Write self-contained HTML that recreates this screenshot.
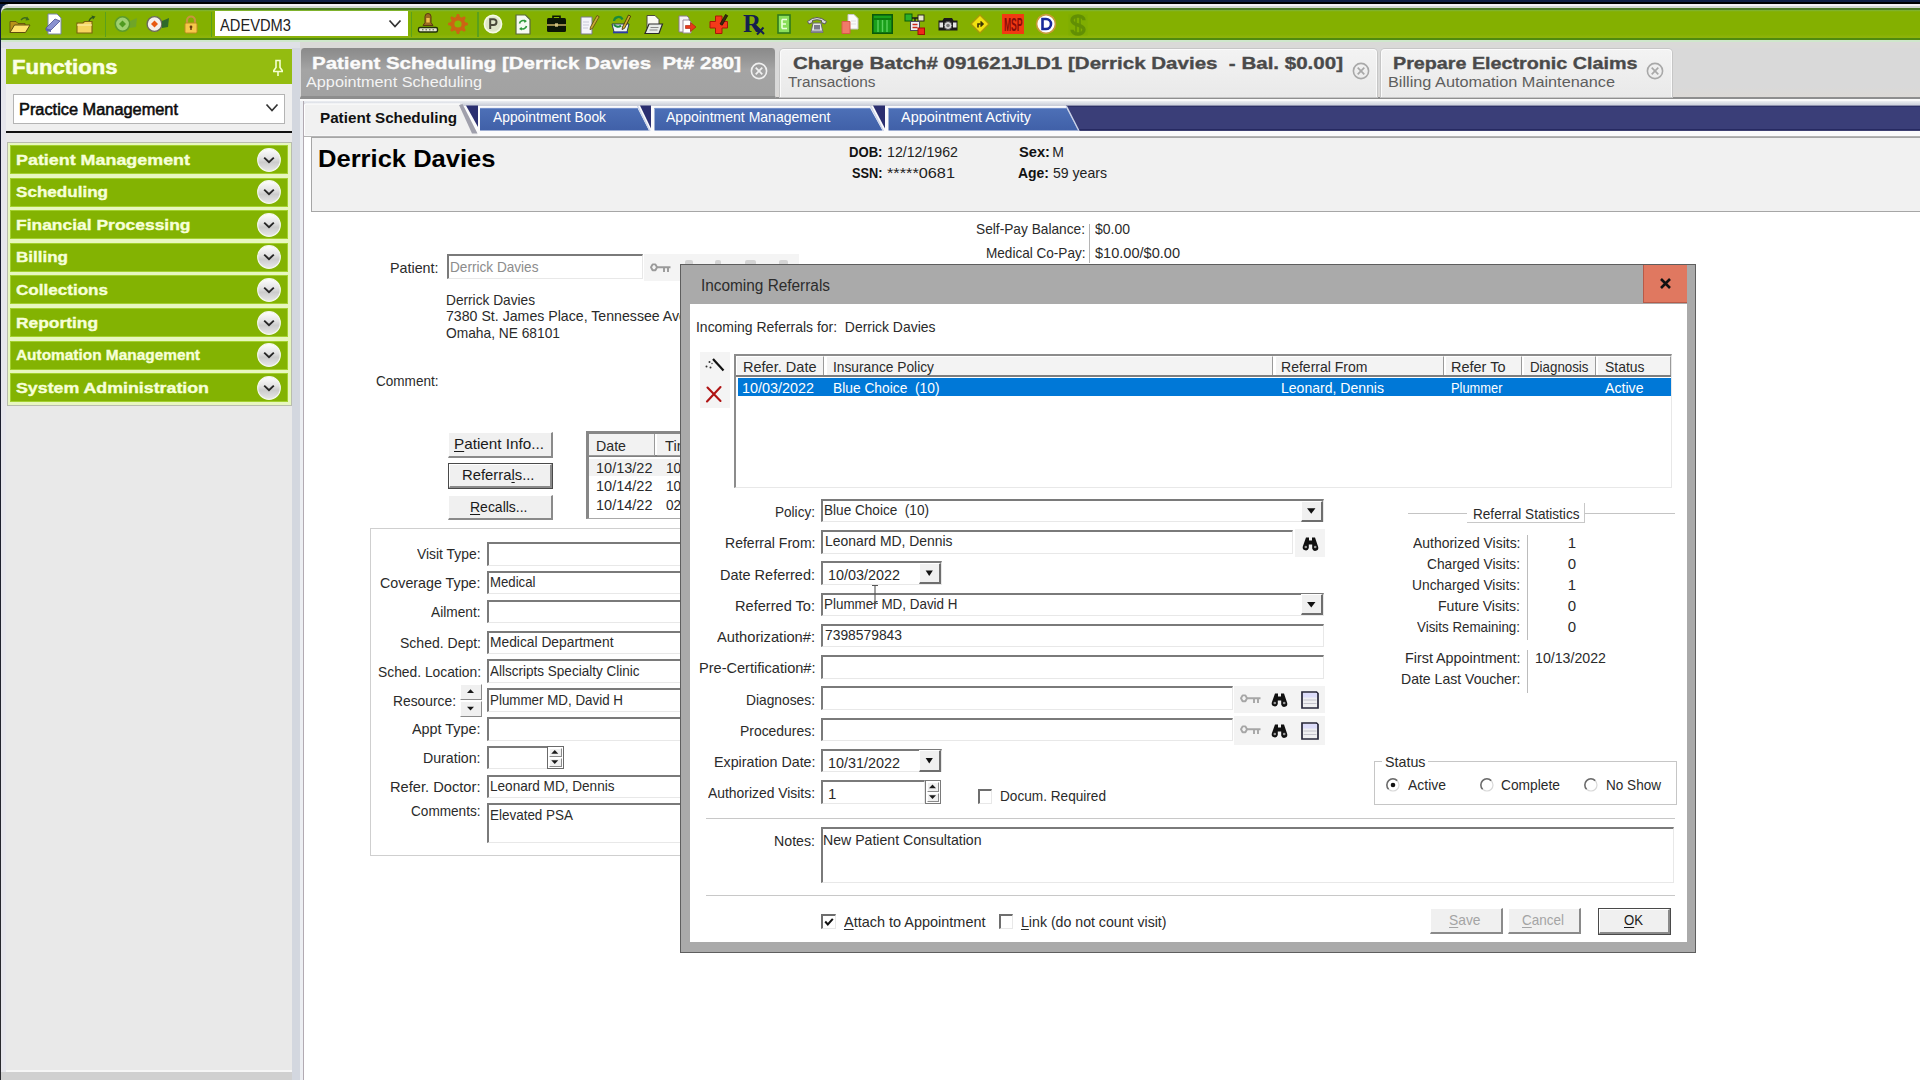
<!DOCTYPE html>
<html><head><meta charset="utf-8"><title>Patient Scheduling</title>
<style>
html,body{margin:0;padding:0;overflow:hidden}
body{width:1920px;height:1080px;overflow:hidden;position:relative;background:linear-gradient(#0f1f45 0,#14182e 10%,#2a2a2e 100%);font-family:"Liberation Sans",sans-serif;}
div{position:absolute;box-sizing:border-box}
svg{position:absolute;overflow:visible}
.t{position:absolute;transform-origin:0 50%;white-space:pre;line-height:1;font-family:"Liberation Sans",sans-serif;}
.fld{background:#fff;border:1px solid #fff;border-top:2px solid #7a7a7a;border-left:2px solid #7a7a7a;border-right-color:#e8e8e8;border-bottom-color:#e8e8e8}
.btn{background:#f0f0f0;border:1px solid #fff;border-right:2px solid #8a8a8a;border-bottom:2px solid #8a8a8a}
.ib{background:#f0f0f0}
u{text-decoration-thickness:1px;text-underline-offset:2px}

</style></head>
<body>
<div style="left:0px;top:0px;width:1920px;height:4px;background:linear-gradient(#0f1f45 0,#0f1f45 45%,#000 60%,#000 100%)"></div>
<div style="left:1px;top:3.5px;width:1919px;height:1076.5px;background:#e6e6ea;border-top-left-radius:8px;overflow:hidden"></div>
<div style="left:8px;top:3.5px;width:1912px;height:2px;background:#f4f0f4"></div>
<div style="left:4px;top:5.5px;width:1916px;height:2.5px;background:#d2d6d0"></div>
<div style="left:1px;top:8px;width:1919px;height:32px;background:linear-gradient(#4c7a25 0,#4c7a25 5%,#7db440 6%,#84b000 12%,#84b000 82%,#8db30a 90%,#8db30a 93%,#4f8a10 95%,#4f8a10 100%);border-top-left-radius:6px"></div>
<div style="left:1px;top:40px;width:1919px;height:2.2px;background:#cfe7cc"></div>
<div style="left:1px;top:42px;width:1919px;height:6.5px;background:#dadad8"></div>
<div style="left:1px;top:42px;width:299px;height:7px;background:#dfe1e6"></div>
<div style="left:104.5px;top:12px;width:1.5px;height:25px;background:#5aa01c"></div>
<div style="left:210.5px;top:12px;width:1.5px;height:25px;background:#5aa01c"></div>
<div style="left:410.5px;top:12px;width:1.5px;height:25px;background:#5aa01c"></div>
<div style="left:477px;top:12px;width:1.5px;height:25px;background:#5aa01c"></div>
<div style="left:215px;top:11px;width:193px;height:24.5px;background:#fff"></div>
<span class="t" style="top:16.5px;font-size:16.5px;color:#222;transform:scaleX(0.8899);left:220px;">ADEVDM3</span>
<svg style="left:388px;top:19px" width="14" height="10" viewBox="0 0 14 10"><path d="M1.5 1.5 L7 7.5 L12.5 1.5" fill="none" stroke="#333" stroke-width="1.8"/></svg>
<svg style="left:9.0px;top:14.5px" width="22" height="20" viewBox="0 0 22 20"><path d="M1 6.500h6l2 2h7v9H1z" fill="#b8921a" stroke="#5a4a0c" stroke-width=".8"/><path d="M1 17.500 L5.500 10 H21 L16.500 17.500Z" fill="#ffe46e" stroke="#5e4e0e" stroke-width="1"/><path d="M12 5 q3 -4 7 -1" fill="none" stroke="#3c6a1c" stroke-width="1.4"/><path d="M18 1.5 l2.5 3.5 -4 .5z" fill="#3c6a1c"/></svg>
<svg style="left:44.0px;top:13.0px" width="20" height="22" viewBox="0 0 20 22"><path d="M4 1h9l4 4v16H4z" fill="#fff" stroke="#7a86a8" stroke-width="1"/><path d="M2 15 L11 6 l5 2 -9 9 -5 0z" fill="#8a92d0" stroke="#4a4f90" stroke-width=".8"/><path d="M2 15l5 2 0 2 -5 -1z" fill="#5a62b0"/></svg>
<svg style="left:74.5px;top:14.5px" width="22" height="20" viewBox="0 0 22 20"><path d="M2 8h6l1.5 -1.5H17V18H2z" fill="#f6d45e" stroke="#7a6210" stroke-width="1.100"/><path d="M2 10h15" stroke="#fff1b0" stroke-width="1"/><path d="M14 6 q1 -3 4 -4" fill="none" stroke="#2f5a1c" stroke-width="1.4"/><path d="M16.5 0.5 l4 1 -2.5 3z" fill="#2f5a1c"/></svg>
<svg style="left:114.0px;top:14.5px" width="26" height="18" viewBox="0 0 26 18"><circle cx="8.5" cy="9" r="7.2" fill="#9fd070" stroke="#5c9a2c" stroke-width="1.6"/><path d="M5 9 l3.5 -3.5 3.5 3.5 -3.5 3.5z" fill="#4f9a1f"/><path d="M16 6 l7 -3 -1 9 -6 1z" fill="#6aa232" opacity=".8"/></svg>
<svg style="left:146.0px;top:14.5px" width="26" height="18" viewBox="0 0 26 18"><circle cx="8.5" cy="9" r="7.4" fill="#f4f0ea" stroke="#6a6a5a" stroke-width="1.4"/><path d="M5 9 l3.5 -3.5 3.5 3.5 -3.5 3.5z" fill="#e85a10"/><path d="M16 6 l7 -3 -1 9 -6 1z" fill="#2f6a2a"/></svg>
<svg style="left:182.5px;top:14.0px" width="16" height="20" viewBox="0 0 16 20"><path d="M4 9V6.5a4 4 0 0 1 8 0V9" fill="none" stroke="#c89440" stroke-width="2.2"/><rect x="2" y="9" width="12" height="10" rx="1.5" fill="#f6c84a" stroke="#c08c20" stroke-width="1"/><circle cx="8" cy="13" r="1.4" fill="#6a3a10"/><path d="M8 13v3" stroke="#6a3a10" stroke-width="1.4"/></svg>
<svg style="left:416.5px;top:13.5px" width="22" height="20" viewBox="0 0 22 20"><path d="M8 2.5a3 3 0 0 1 6 0v6l2 3H6l2 -3z" fill="#9a6a20" stroke="#5a3a10" stroke-width="1"/><rect x="9.3" y="4" width="3.4" height="4.5" fill="#f0c050"/><rect x="1.5" y="13.5" width="19" height="4.5" rx="1.5" fill="#e8e8d8" stroke="#22300a" stroke-width="1.4"/><path d="M5 15.8h12" stroke="#56663a" stroke-width="1" stroke-dasharray="1.5 2"/></svg>
<svg style="left:447.0px;top:13.0px" width="22" height="22" viewBox="0 0 22 22"><polygon points="20.94,9.90 20.94,12.10 17.91,13.01 17.31,14.47 18.80,17.25 17.25,18.80 14.47,17.31 13.01,17.91 12.10,20.94 9.90,20.94 8.99,17.91 7.53,17.31 4.75,18.80 3.20,17.25 4.69,14.47 4.09,13.01 1.06,12.10 1.06,9.90 4.09,8.99 4.69,7.53 3.20,4.75 4.75,3.20 7.53,4.69 8.99,4.09 9.90,1.06 12.10,1.06 13.01,4.09 14.47,4.69 17.25,3.20 18.80,4.75 17.31,7.53 17.91,8.99" fill="#cc6414"/><circle cx="11" cy="11" r="7" fill="#cc6414"/><circle cx="11" cy="11" r="3.6" fill="#8ab804"/></svg>
<svg style="left:483.0px;top:13.5px" width="20" height="20" viewBox="0 0 20 20"><circle cx="10" cy="10" r="8.6" fill="#dfe6c8" stroke="#f6fae6" stroke-width="1.6"/><path d="M7.2 15V5.2h3.4a2.9 2.9 0 0 1 0 5.8H7.6" fill="none" stroke="#4a4a3a" stroke-width="2"/></svg>
<svg style="left:514.0px;top:13.5px" width="18" height="21" viewBox="0 0 18 21"><path d="M2 1h9.5l4.5 4.5V20H2z" fill="#f6faf2" stroke="#5a6a3a" stroke-width="1.2"/><path d="M5.5 9.5a3.6 3.6 0 0 1 6 -2" fill="none" stroke="#2f9a3a" stroke-width="1.6"/><path d="M12.5 12a3.6 3.6 0 0 1 -6 2" fill="none" stroke="#2f9a3a" stroke-width="1.6"/><path d="M10 5.5l3 1.5 -2.5 2z M8 16.500l-3 -1.5 2.500 -2z" fill="#2f9a3a"/></svg>
<svg style="left:545.5px;top:13.5px" width="21" height="19" viewBox="0 0 21 19"><path d="M7 4V2.2h7V4" fill="none" stroke="#0a1404" stroke-width="1.6"/><rect x="1" y="4" width="19" height="14" rx="1.5" fill="#0c1606"/><rect x="1" y="10" width="19" height="2" fill="#9a8a4a"/><rect x="9" y="9.3" width="3" height="3.4" fill="#d0c080"/></svg>
<svg style="left:578.5px;top:13.5px" width="21" height="21" viewBox="0 0 21 21"><path d="M2 3h11l0 17H2z" fill="#f4f4fa" stroke="#7a7a8a" stroke-width="1"/><path d="M4 8h6M4 11h6M4 14h5" stroke="#c8c8d8" stroke-width="1"/><path d="M11.500 13 L18 1.500 l2.200 1.200 L13.600 14.300 l-2.600 1.400z" fill="#c8a838" stroke="#5a4a10" stroke-width=".8"/></svg>
<svg style="left:610.0px;top:13.0px" width="22" height="22" viewBox="0 0 22 22"><path d="M2 11h17l-2 8H4z" fill="#eef2fa" stroke="#2a3a5a" stroke-width="1"/><path d="M3 19.500h15" stroke="#2a3aaa" stroke-width="1.6"/><path d="M4 8a4.500 4.500 0 0 1 8.500 -1.500" fill="none" stroke="#1a8a3a" stroke-width="2.200"/><path d="M11 12.500a4.500 4.500 0 0 1 -7 -1" fill="none" stroke="#1a8a3a" stroke-width="2.200"/><path d="M12.500 14 L18.500 2 l2.200 1.200 L14.700 15.200 l-2.600 1.400z" fill="#d0a830" stroke="#3a2a08" stroke-width=".8"/></svg>
<svg style="left:644.0px;top:13.5px" width="20" height="21" viewBox="0 0 20 21"><path d="M3 1.500h8l4 4V14H3z" fill="#fafaf2" stroke="#4a4a3a" stroke-width="1"/><path d="M1 19.500 L5 10h13.500 L15 19.500z" fill="#e8ece8" stroke="#2a2a2a" stroke-width="1.200"/><path d="M6.500 13.500h8M5.500 16h8" stroke="#8a8a8a" stroke-width="1"/></svg>
<svg style="left:677.0px;top:14.0px" width="20" height="20" viewBox="0 0 20 20"><path d="M2 2h8l2 2v14H2z" fill="#f6f2f6" stroke="#8a7a8a" stroke-width="1"/><path d="M6 6h6l2 2v11H6z" fill="#fff" stroke="#9a8a9a" stroke-width="1"/><path d="M8.500 11.500h5v-3l5.500 4.500 -5.500 4.500v-3h-5z" fill="#e8381a" stroke="#a81a08" stroke-width=".6"/></svg>
<svg style="left:708.0px;top:13.0px" width="22" height="22" viewBox="0 0 22 22"><path d="M7.500 3h6.500v5.500h5.500v6.500h-5.500v5.500H7.500v-5.500H2V8.500h5.500z" fill="#f43a1a" stroke="#a81808" stroke-width="1"/><path d="M12 11 L17.500 1.500 l2.200 1.200 L14.200 12.200z" fill="#3a2a10" stroke="#1a1408" stroke-width=".8"/></svg>
<span class="t" style="left:743px;top:10.5px;font:bold 25px/1 'Liberation Serif',serif;color:#14204e">R</span>
<svg style="left:754px;top:24px" width="12" height="12" viewBox="0 0 12 12"><path d="M1 1 L10 10 M9.500 3.500 L3 10.500" stroke="#14204e" stroke-width="2"/></svg>
<svg style="left:777.0px;top:14.0px" width="14" height="20" viewBox="0 0 14 20"><rect x="1" y="1" width="12" height="18" fill="#8ade5a" stroke="#2f7a1c" stroke-width="1.600"/><path d="M5 5.500h5M5 10h4M5 14.500h5M5 5.500v9" stroke="#eaffda" stroke-width="1.600" fill="none"/></svg>
<svg style="left:806.0px;top:14.0px" width="22" height="20" viewBox="0 0 22 20"><path d="M1.500 7.500 q9.500 -8 19 0 l-1.500 2.500 -3.500 -1.500 v-2 q-4.500 -1.500 -9 0 v2 l-3.500 1.500z" fill="#d8d8d8" stroke="#5a5a5a" stroke-width="1"/><path d="M5 18.500 L7 9h8l2 9.500z" fill="#e6e6e6" stroke="#6a6a6a" stroke-width="1"/><rect x="8" y="11" width="6" height="4.500" fill="#7a7a8a"/><rect x="5.500" y="16.500" width="11" height="2" fill="#8a8a9a"/></svg>
<svg style="left:840.0px;top:13.0px" width="20" height="22" viewBox="0 0 20 22"><path d="M8 1.500h6l4 4V16H8z" fill="#fafafa" stroke="#c8c8c8" stroke-width="1"/><path d="M2 8.500h8v12H2z" fill="#f07a6a" stroke="#d85a4a" stroke-width="1"/><path d="M11 8h5M11 11h5" stroke="#e0e0e0" stroke-width="1"/></svg>
<svg style="left:871.5px;top:14.0px" width="21" height="20" viewBox="0 0 21 20"><rect x=".8" y=".8" width="19.400" height="18.400" fill="#1aa01a" stroke="#0a5a0a" stroke-width="1.600"/><path d="M2 5h17" stroke="#0a6a0a" stroke-width="1.400"/><path d="M6 6v12M10.500 6v12M15 6v12" stroke="#5ad05a" stroke-width="1.400"/></svg>
<svg style="left:904.0px;top:13.0px" width="22" height="22" viewBox="0 0 22 22"><rect x="1" y="1" width="7" height="7" fill="#2ab02a" stroke="#0a5a0a"/><rect x="14" y="2" width="6" height="6" fill="#e8e8c8" stroke="#2a2a1a"/><path d="M8 5h6M11 5v6" stroke="#1a1a1a" stroke-width="1.400"/><rect x="6.500" y="8.500" width="9" height="9" fill="#f0f0f6" stroke="#4a4a5a"/><path d="M8.500 11.500h5M8.500 14.500h5" stroke="#d02a1a" stroke-width="1.600"/><rect x="14" y="15" width="6.500" height="6.500" fill="#f02a1a" stroke="#a01008"/></svg>
<svg style="left:936.5px;top:16.0px" width="22" height="16" viewBox="0 0 22 16"><path d="M1.500 4.500h4l1.500 -2.500h8l1.500 2.500h4v10h-19z" fill="#1a1a1a"/><circle cx="11" cy="9.500" r="4" fill="#d8d8d8" stroke="#4a4a4a"/><circle cx="11" cy="9.500" r="1.800" fill="#7a7a7a"/><rect x="2.500" y="6.500" width="3.500" height="5" fill="#e6e6e6"/><rect x="16" y="6.500" width="3.500" height="5" fill="#e6e6e6"/></svg>
<svg style="left:970.0px;top:14.0px" width="20" height="20" viewBox="0 0 20 20"><path d="M10 1 L19 10 L10 19 L1 10z" fill="#f2e010" stroke="#a89a08" stroke-width="1.400"/><path d="M8 13.500v-3.500h4.500 M10.500 7.500 l2.500 2.500 -2.500 2.500" fill="none" stroke="#3a3408" stroke-width="1.600"/></svg>
<div style="left:1002px;top:14px;width:21.5px;height:20px;background:#f23a12"></div>
<span class="t" style="top:15.5px;font-size:18px;color:#8a0a08;font-weight:bold;transform:scaleX(0.4742);left:1003.5px;">MSP</span>
<svg style="left:1034.5px;top:13.0px" width="22" height="22" viewBox="0 0 22 22"><circle cx="11" cy="11" r="9.400" fill="#fff" stroke="#c89a3a" stroke-width="1.600"/><path d="M7.500 6h3.500a5 5 0 0 1 0 10H7.500z" fill="none" stroke="#1a2a9a" stroke-width="2.600"/></svg>
<svg style="left:1068.2px;top:13.5px" width="20" height="22" viewBox="0 0 20 22"><rect x=".5" y=".5" width="19" height="21" fill="#7cab02" opacity=".55"/><path d="M16 6.200a6 4.200 0 0 0 -12 0c0 6 12 3.600 12 9.600a6 4.200 0 0 1 -12 0" fill="none" stroke="#628f04" stroke-width="3.400"/><path d="M8 1v20M12 1v20" stroke="#628f04" stroke-width="1.600"/></svg>
<div style="left:1px;top:48px;width:5px;height:1032px;background:#e6e6ec"></div>
<div style="left:6px;top:49px;width:286px;height:35px;background:#94bc10"></div>
<span class="t" style="top:56.5px;font-size:20px;color:#fbffe6;font-weight:bold;transform:scaleX(1.1042);-webkit-text-stroke:0.5px #fbffe6;left:12px;">Functions</span>
<svg style="left:272px;top:59px" width="12" height="18" viewBox="0 0 12 18"><path d="M4 1.5h4v7l2.2 3v1H1.8v-1L4 8.5z" fill="none" stroke="#f4ffd0" stroke-width="1.6"/><path d="M6 12.5v4.5" stroke="#f4ffd0" stroke-width="1.6"/></svg>
<div style="left:6px;top:84px;width:286px;height:47.5px;background:#efefef"></div>
<div style="left:12.5px;top:93.5px;width:272.5px;height:30.5px;background:#fff;border:1px solid #b4b4b4"></div>
<span class="t" style="top:101.5px;font-size:16px;color:#0c0c0c;transform:scaleX(1.0216);-webkit-text-stroke:0.55px #0c0c0c;left:19px;">Practice Management</span>
<svg style="left:265px;top:103px" width="14" height="10" viewBox="0 0 14 10"><path d="M1.5 1.5 L7 7.5 L12.5 1.5" fill="none" stroke="#333" stroke-width="1.7"/></svg>
<div style="left:6px;top:131px;width:286px;height:2px;background:#111"></div>
<div style="left:6px;top:133px;width:286px;height:937px;background:#e9e9e9"></div>
<div style="left:6px;top:1070px;width:286px;height:2px;background:#f6f6f6"></div>
<div style="left:1px;top:1072px;width:291px;height:8px;background:#d0d0d0"></div>
<div style="left:7px;top:142px;width:284.5px;height:263.5px;background:#e8f7c0;border:1px solid #b8bcae"></div>
<div style="left:10px;top:145.0px;width:278px;height:29px;background:#83b302;border:1px solid #a4d030"></div>
<span class="t" style="top:151.5px;font-size:15.5px;color:#f6ffd8;font-weight:bold;transform:scaleX(1.1543);-webkit-text-stroke:0.4px #f6ffd8;left:16px;">Patient Management</span>
<svg style="left:256.5px;top:147.5px" width="24" height="24" viewBox="0 0 24 24"><defs><linearGradient id="cb0" x1="0" y1="0" x2="0" y2="1"><stop offset="0" stop-color="#ffffff"/><stop offset="0.4" stop-color="#e4e4e4"/><stop offset="0.6" stop-color="#cccccc"/><stop offset="1" stop-color="#e8e8e8"/></linearGradient></defs><circle cx="12" cy="12" r="11.3" fill="url(#cb0)" stroke="#f4f8ec" stroke-width="1.2"/><path d="M7.2 9.6 L12 14.2 L16.8 9.6" fill="none" stroke="#262626" stroke-width="1.9"/></svg>
<div style="left:10px;top:177.6px;width:278px;height:29px;background:#83b302;border:1px solid #a4d030"></div>
<span class="t" style="top:184.1px;font-size:15.5px;color:#f6ffd8;font-weight:bold;transform:scaleX(1.1012);-webkit-text-stroke:0.4px #f6ffd8;left:16px;">Scheduling</span>
<svg style="left:256.5px;top:180.1px" width="24" height="24" viewBox="0 0 24 24"><defs><linearGradient id="cb1" x1="0" y1="0" x2="0" y2="1"><stop offset="0" stop-color="#ffffff"/><stop offset="0.4" stop-color="#e4e4e4"/><stop offset="0.6" stop-color="#cccccc"/><stop offset="1" stop-color="#e8e8e8"/></linearGradient></defs><circle cx="12" cy="12" r="11.3" fill="url(#cb1)" stroke="#f4f8ec" stroke-width="1.2"/><path d="M7.2 9.6 L12 14.2 L16.8 9.6" fill="none" stroke="#262626" stroke-width="1.9"/></svg>
<div style="left:10px;top:210.2px;width:278px;height:29px;background:#83b302;border:1px solid #a4d030"></div>
<span class="t" style="top:216.7px;font-size:15.5px;color:#f6ffd8;font-weight:bold;transform:scaleX(1.1254);-webkit-text-stroke:0.4px #f6ffd8;left:16px;">Financial Processing</span>
<svg style="left:256.5px;top:212.7px" width="24" height="24" viewBox="0 0 24 24"><defs><linearGradient id="cb2" x1="0" y1="0" x2="0" y2="1"><stop offset="0" stop-color="#ffffff"/><stop offset="0.4" stop-color="#e4e4e4"/><stop offset="0.6" stop-color="#cccccc"/><stop offset="1" stop-color="#e8e8e8"/></linearGradient></defs><circle cx="12" cy="12" r="11.3" fill="url(#cb2)" stroke="#f4f8ec" stroke-width="1.2"/><path d="M7.2 9.6 L12 14.2 L16.8 9.6" fill="none" stroke="#262626" stroke-width="1.9"/></svg>
<div style="left:10px;top:242.8px;width:278px;height:29px;background:#83b302;border:1px solid #a4d030"></div>
<span class="t" style="top:249.3px;font-size:15.5px;color:#f6ffd8;font-weight:bold;transform:scaleX(1.0980);-webkit-text-stroke:0.4px #f6ffd8;left:16px;">Billing</span>
<svg style="left:256.5px;top:245.3px" width="24" height="24" viewBox="0 0 24 24"><defs><linearGradient id="cb3" x1="0" y1="0" x2="0" y2="1"><stop offset="0" stop-color="#ffffff"/><stop offset="0.4" stop-color="#e4e4e4"/><stop offset="0.6" stop-color="#cccccc"/><stop offset="1" stop-color="#e8e8e8"/></linearGradient></defs><circle cx="12" cy="12" r="11.3" fill="url(#cb3)" stroke="#f4f8ec" stroke-width="1.2"/><path d="M7.2 9.6 L12 14.2 L16.8 9.6" fill="none" stroke="#262626" stroke-width="1.9"/></svg>
<div style="left:10px;top:275.4px;width:278px;height:29px;background:#83b302;border:1px solid #a4d030"></div>
<span class="t" style="top:281.9px;font-size:15.5px;color:#f6ffd8;font-weight:bold;transform:scaleX(1.1012);-webkit-text-stroke:0.4px #f6ffd8;left:16px;">Collections</span>
<svg style="left:256.5px;top:277.9px" width="24" height="24" viewBox="0 0 24 24"><defs><linearGradient id="cb4" x1="0" y1="0" x2="0" y2="1"><stop offset="0" stop-color="#ffffff"/><stop offset="0.4" stop-color="#e4e4e4"/><stop offset="0.6" stop-color="#cccccc"/><stop offset="1" stop-color="#e8e8e8"/></linearGradient></defs><circle cx="12" cy="12" r="11.3" fill="url(#cb4)" stroke="#f4f8ec" stroke-width="1.2"/><path d="M7.2 9.6 L12 14.2 L16.8 9.6" fill="none" stroke="#262626" stroke-width="1.9"/></svg>
<div style="left:10px;top:308.0px;width:278px;height:29px;background:#83b302;border:1px solid #a4d030"></div>
<span class="t" style="top:314.5px;font-size:15.5px;color:#f6ffd8;font-weight:bold;transform:scaleX(1.1204);-webkit-text-stroke:0.4px #f6ffd8;left:16px;">Reporting</span>
<svg style="left:256.5px;top:310.5px" width="24" height="24" viewBox="0 0 24 24"><defs><linearGradient id="cb5" x1="0" y1="0" x2="0" y2="1"><stop offset="0" stop-color="#ffffff"/><stop offset="0.4" stop-color="#e4e4e4"/><stop offset="0.6" stop-color="#cccccc"/><stop offset="1" stop-color="#e8e8e8"/></linearGradient></defs><circle cx="12" cy="12" r="11.3" fill="url(#cb5)" stroke="#f4f8ec" stroke-width="1.2"/><path d="M7.2 9.6 L12 14.2 L16.8 9.6" fill="none" stroke="#262626" stroke-width="1.9"/></svg>
<div style="left:10px;top:340.6px;width:278px;height:29px;background:#83b302;border:1px solid #a4d030"></div>
<span class="t" style="top:347.1px;font-size:15.5px;color:#f6ffd8;font-weight:bold;transform:scaleX(0.9938);-webkit-text-stroke:0.4px #f6ffd8;left:16px;">Automation Management</span>
<svg style="left:256.5px;top:343.1px" width="24" height="24" viewBox="0 0 24 24"><defs><linearGradient id="cb6" x1="0" y1="0" x2="0" y2="1"><stop offset="0" stop-color="#ffffff"/><stop offset="0.4" stop-color="#e4e4e4"/><stop offset="0.6" stop-color="#cccccc"/><stop offset="1" stop-color="#e8e8e8"/></linearGradient></defs><circle cx="12" cy="12" r="11.3" fill="url(#cb6)" stroke="#f4f8ec" stroke-width="1.2"/><path d="M7.2 9.6 L12 14.2 L16.8 9.6" fill="none" stroke="#262626" stroke-width="1.9"/></svg>
<div style="left:10px;top:373.2px;width:278px;height:29px;background:#83b302;border:1px solid #a4d030"></div>
<span class="t" style="top:379.7px;font-size:15.5px;color:#f6ffd8;font-weight:bold;transform:scaleX(1.1471);-webkit-text-stroke:0.4px #f6ffd8;left:16px;">System Administration</span>
<svg style="left:256.5px;top:375.7px" width="24" height="24" viewBox="0 0 24 24"><defs><linearGradient id="cb7" x1="0" y1="0" x2="0" y2="1"><stop offset="0" stop-color="#ffffff"/><stop offset="0.4" stop-color="#e4e4e4"/><stop offset="0.6" stop-color="#cccccc"/><stop offset="1" stop-color="#e8e8e8"/></linearGradient></defs><circle cx="12" cy="12" r="11.3" fill="url(#cb7)" stroke="#f4f8ec" stroke-width="1.2"/><path d="M7.2 9.6 L12 14.2 L16.8 9.6" fill="none" stroke="#262626" stroke-width="1.9"/></svg>
<div style="left:292px;top:48px;width:8px;height:1032px;background:#d3d7df"></div>
<div style="left:300px;top:97px;width:3px;height:983px;background:#eceef2"></div>
<div style="left:303px;top:100px;width:1.3px;height:980px;background:#b2aab2"></div>
<div style="left:300px;top:48px;width:1620px;height:49px;background:linear-gradient(#d9d9d9 0,#d9d9d9 80%,#dcd9d6 100%)"></div>
<div style="left:300px;top:96.8px;width:1620px;height:1.8px;background:#8e8e8e"></div>
<div style="left:300px;top:98.5px;width:1620px;height:2px;background:#fafafa"></div>
<div style="left:304px;top:100.5px;width:1616px;height:5px;background:linear-gradient(#eceef2,#c6cad6)"></div>
<div style="left:299.5px;top:47.8px;width:476px;height:50.2px;background:linear-gradient(#8a8a8a 0,#979797 25%,#a4a4a4 45%,#a2a2a2 100%);border-left:1px solid #d8d8d8;border-right:1px solid #d8d8d8;border-bottom:2px solid #8e8e8e;border-radius:4px 4px 0 0"></div>
<span class="t" style="top:54.8px;font-size:17px;color:#fbfbfb;font-weight:bold;transform:scaleX(1.2044);-webkit-text-stroke:0.35px #fbfbfb;left:312px;">Patient Scheduling [Derrick Davies  Pt# 280]</span>
<span class="t" style="top:74.0px;font-size:15.5px;color:#f4f4f4;transform:scaleX(1.0473);left:306px;">Appointment Scheduling</span>
<svg style="left:750px;top:62px" width="18" height="18" viewBox="0 0 18 18"><circle cx="9" cy="9" r="7.6" fill="none" stroke="#f0f0f0" stroke-width="1.6"/><path d="M5.7 5.7 L12.3 12.3 M12.3 5.7 L5.7 12.3" stroke="#f0f0f0" stroke-width="1.7"/></svg>
<div style="left:779.5px;top:48.5px;width:597px;height:48.5px;background:linear-gradient(#f3f3f3,#e9e9e9);border:1.5px solid #fbfbfb;border-bottom:none;border-radius:4px 4px 0 0;box-shadow:0 0 0 1px #c6c6c6"></div>
<span class="t" style="top:54.8px;font-size:17px;color:#4a4a4a;font-weight:bold;transform:scaleX(1.2075);-webkit-text-stroke:0.35px #4a4a4a;left:792.5px;">Charge Batch# 091621JLD1 [Derrick Davies  - Bal. $0.00]</span>
<span class="t" style="top:74.0px;font-size:15.5px;color:#5e5e5e;transform:scaleX(0.9926);left:787.5px;">Transactions</span>
<svg style="left:1352px;top:62px" width="18" height="18" viewBox="0 0 18 18"><circle cx="9" cy="9" r="7.6" fill="none" stroke="#a8a8a8" stroke-width="1.6"/><path d="M5.7 5.7 L12.3 12.3 M12.3 5.7 L5.7 12.3" stroke="#a8a8a8" stroke-width="1.7"/></svg>
<div style="left:1381px;top:48.5px;width:290.5px;height:48.5px;background:linear-gradient(#f3f3f3,#e9e9e9);border:1.5px solid #fbfbfb;border-bottom:none;border-radius:4px 4px 0 0;box-shadow:0 0 0 1px #c6c6c6"></div>
<span class="t" style="top:54.8px;font-size:17px;color:#4a4a4a;font-weight:bold;transform:scaleX(1.1603);-webkit-text-stroke:0.35px #4a4a4a;left:1393px;">Prepare Electronic Claims</span>
<span class="t" style="top:74.0px;font-size:15.5px;color:#5e5e5e;transform:scaleX(1.0496);left:1388px;">Billing Automation Maintenance</span>
<svg style="left:1645.5px;top:62px" width="18" height="18" viewBox="0 0 18 18"><circle cx="9" cy="9" r="7.6" fill="none" stroke="#a8a8a8" stroke-width="1.6"/><path d="M5.7 5.7 L12.3 12.3 M12.3 5.7 L5.7 12.3" stroke="#a8a8a8" stroke-width="1.7"/></svg>
<div style="left:304px;top:105.5px;width:1616px;height:30px;background:#fbfbfc"></div>
<div style="left:304px;top:135.5px;width:1616px;height:1.2px;background:#b4b4b4"></div>
<svg style="left:304px;top:100px" width="1616" height="38" viewBox="304 100 1616 38">
<defs><linearGradient id="tb" x1="0" y1="0" x2="0" y2="1"><stop offset="0" stop-color="#4d70b7"/><stop offset="1" stop-color="#4060a8"/></linearGradient></defs>
<!-- navy band right of last tab -->
<path d="M1066 105.8 H1920 V130.6 H1078 Z" fill="#3a3e78"/>
<path d="M1066 106.300 H1920" stroke="#2a2d62" stroke-width="1"/>
<path d="M1078 130 H1920" stroke="#20235a" stroke-width="1.400"/>
<!-- selected tab -->
<path d="M304 135.5 V105 Q304 103.5 306 103.5 H462 L478 135.5 Z" fill="#f1f1f1"/>
<path d="M462.500 104 L477.500 133.500 L472 133.500 L459 105 Z" fill="#a0a0ac"/>
<path d="M466 105.500 L478 105.500 L478 127 Z" fill="#2b2f70"/>
<path d="M304.5 135 V105 Q304.5 104 306 104 H460" fill="none" stroke="#fff" stroke-width="1"/>
<!-- blue tabs -->
<path d="M480 108 H637.500 L649 130.5 H480 Z" fill="url(#tb)"/>
<path d="M637.500 106 L650 131" stroke="#cdd5ea" stroke-width="1.400"/>
<path d="M640 105.500 L651 105.500 L651 128.500 Z" fill="#2b2f70"/>
<path d="M654.500 108 H870 L882.500 130.5 H654.500 Z" fill="url(#tb)"/>
<path d="M870.500 106 L883.500 131" stroke="#cdd5ea" stroke-width="1.400"/>
<path d="M873 105.500 L885 105.500 L885 128.500 Z" fill="#2b2f70"/>
<path d="M888.500 108 H1066.500 L1078.500 130.5 H888.500 Z" fill="url(#tb)"/>
<path d="M1066.300 106 L1079 131" stroke="#cdd5ea" stroke-width="1.400"/>
<path d="M480 108.400 H637 M654.500 108.400 H870 M888.500 108.400 H1066" stroke="#7892cc" stroke-width="1"/>
</svg>
<span class="t" style="top:109.5px;font-size:15.5px;color:#111;font-weight:bold;transform:scaleX(0.9820);left:320px;">Patient Scheduling</span>
<span class="t" style="top:109.0px;font-size:15px;color:#fff;transform:scaleX(0.9219);left:492.5px;">Appointment Book</span>
<span class="t" style="top:109.0px;font-size:15px;color:#fff;transform:scaleX(0.9349);left:666px;">Appointment Management</span>
<span class="t" style="top:109.0px;font-size:15px;color:#fff;transform:scaleX(0.9624);left:901px;">Appointment Activity</span>
<div style="left:304px;top:136.7px;width:1616px;height:943.3px;background:#fff"></div>
<div style="left:310.5px;top:137px;width:1611px;height:75px;background:#f1f1f1;border:1px solid #a6a6a6"></div>
<span class="t" style="top:146.5px;font-size:24px;color:#000;font-weight:bold;transform:scaleX(1.0643);left:317.5px;">Derrick Davies</span>
<span class="t" style="top:145.0px;font-size:14.5px;color:#111;font-weight:bold;transform:scaleX(0.9039);left:849px;">DOB:</span>
<span class="t" style="top:145.0px;font-size:14.5px;color:#222;transform:scaleX(0.9783);left:887px;">12/12/1962</span>
<span class="t" style="top:165.5px;font-size:14.5px;color:#111;font-weight:bold;transform:scaleX(0.8801);left:852px;">SSN:</span>
<span class="t" style="top:165.5px;font-size:14.5px;color:#222;transform:scaleX(1.1243);left:887px;">*****0681</span>
<span class="t" style="top:145.0px;font-size:14.5px;color:#111;font-weight:bold;transform:scaleX(1.0117);left:1019px;">Sex:</span>
<span class="t" style="top:145.0px;font-size:14px;color:#222;left:1052.3px;">M</span>
<span class="t" style="top:165.5px;font-size:14.5px;color:#111;font-weight:bold;transform:scaleX(0.9617);left:1018px;">Age:</span>
<span class="t" style="top:165.5px;font-size:14.5px;color:#222;transform:scaleX(0.9708);left:1053px;">59 years</span>
<span class="t" style="top:221.0px;font-size:15px;color:#2a2a2a;transform:scaleX(0.9142);left:976px;">Self-Pay Balance:</span>
<span class="t" style="top:244.5px;font-size:15px;color:#2a2a2a;transform:scaleX(0.9042);left:985.5px;">Medical Co-Pay:</span>
<div style="left:1088.5px;top:224px;width:1.2px;height:39px;background:#b4b4b4"></div>
<span class="t" style="top:221.0px;font-size:15px;color:#2a2a2a;transform:scaleX(0.9322);left:1095px;">$0.00</span>
<span class="t" style="top:244.5px;font-size:15px;color:#2a2a2a;transform:scaleX(0.9704);left:1095px;">$10.00/$0.00</span>
<span class="t" style="top:259.5px;font-size:15px;color:#2a2a2a;transform:scaleX(0.9533);left:390.0px;">Patient:</span>
<div class="fld" style="left:447px;top:254px;width:195.5px;height:25px"></div>
<span class="t" style="top:258.5px;font-size:15px;color:#8c8c8c;transform:scaleX(0.9075);left:450px;">Derrick Davies</span>
<div style="left:644px;top:253.5px;width:154.5px;height:27.5px;background:#f4f4f4"></div>
<svg style="left:649.5px;top:262.5px" width="21" height="11" viewBox="0 0 21 11"><path d="M2.6 1.4h2.8l1.6 2.9 -1.6 2.900h-2.8l-1.600 -2.900z" fill="none" stroke="#9a9a9a" stroke-width="1.900" stroke-linejoin="round"/><path d="M7 4.200h13.500 M14 4.200v4.800 M18 4.200v4.800" stroke="#9a9a9a" stroke-width="1.900" fill="none"/></svg>
<div style="left:685px;top:259.5px;width:8px;height:4.5px;background:#d4d4d4;border-radius:2px 2px 0 0"></div>
<div style="left:715px;top:259.5px;width:6px;height:4.5px;background:#d4d4d4;border-radius:2px 2px 0 0"></div>
<div style="left:745px;top:259.5px;width:11px;height:4.5px;background:#d4d4d4;border-radius:2px 2px 0 0"></div>
<div style="left:779px;top:259.5px;width:9px;height:4.5px;background:#d4d4d4;border-radius:2px 2px 0 0"></div>
<span class="t" style="top:291.5px;font-size:15px;color:#2a2a2a;transform:scaleX(0.9127);left:446px;">Derrick Davies</span>
<span class="t" style="top:308.0px;font-size:15px;color:#2a2a2a;transform:scaleX(0.9434);left:446px;">7380 St. James Place, Tennessee Ave</span>
<span class="t" style="top:325.0px;font-size:15px;color:#2a2a2a;transform:scaleX(0.9175);left:446px;">Omaha, NE 68101</span>
<span class="t" style="top:372.5px;font-size:15px;color:#2a2a2a;transform:scaleX(0.9033);left:376.0px;">Comment:</span>
<div class="btn" style="left:448px;top:432px;width:104.5px;height:25.5px"></div>
<span class="t" style="top:436.25px;font-size:15px;color:#1a1a1a;transform:scaleX(1.0180);left:454px;"><u>P</u>atient Info...</span>
<div style="left:447.5px;top:462.5px;width:105.5px;height:26.5px;background:#4a4a4a"></div>
<div class="btn" style="left:448.5px;top:463.5px;width:103.5px;height:24.5px"></div>
<span class="t" style="top:467.25px;font-size:15px;color:#1a1a1a;transform:scaleX(0.9879);left:462px;">Referra<u>l</u>s...</span>
<div class="btn" style="left:448px;top:494.5px;width:104.5px;height:25.5px"></div>
<span class="t" style="top:498.75px;font-size:15px;color:#1a1a1a;transform:scaleX(0.9319);left:470px;"><u>R</u>ecalls...</span>
<div class="fld" style="left:586px;top:431px;width:120px;height:87.500px;border-top:3px solid #878787;border-left:3px solid #878787;border-bottom:1.500px solid #a8a8a8"></div>
<div style="left:589px;top:455px;width:100px;height:2px;background:#808080"></div>
<div style="left:589px;top:434px;width:66px;height:21.5px;background:#f2f2f2;border-right:1.500px solid #9a9a9a;border-bottom:1.500px solid #9a9a9a"></div>
<div style="left:656.5px;top:434px;width:50px;height:21.5px;background:#f2f2f2;border-bottom:1.500px solid #9a9a9a"></div>
<div style="left:589px;top:458.5px;width:100px;height:17px;background:#f2f2f2"></div>
<span class="t" style="top:438.0px;font-size:15px;color:#2a2a2a;transform:scaleX(0.9467);left:596px;">Date</span>
<span class="t" style="top:438.0px;font-size:15px;color:#2a2a2a;transform:scaleX(0.9762);left:665px;">Time</span>
<span class="t" style="top:459.5px;font-size:15px;color:#2a2a2a;transform:scaleX(0.9676);left:595.5px;">10/13/22</span>
<span class="t" style="top:459.5px;font-size:15px;color:#2a2a2a;transform:scaleX(0.9055);left:666px;">10:00</span>
<span class="t" style="top:478.0px;font-size:15px;color:#2a2a2a;transform:scaleX(0.9676);left:595.5px;">10/14/22</span>
<span class="t" style="top:478.0px;font-size:15px;color:#2a2a2a;transform:scaleX(0.9055);left:666px;">10:00</span>
<span class="t" style="top:496.5px;font-size:15px;color:#2a2a2a;transform:scaleX(0.9676);left:595.5px;">10/14/22</span>
<span class="t" style="top:496.5px;font-size:15px;color:#2a2a2a;transform:scaleX(0.9055);left:666px;">02:00</span>
<div style="left:369.5px;top:528px;width:420px;height:327.5px;background:#fff;border:1.300px solid #cfcfcf"></div>
<span class="t" style="top:546.45px;font-size:15px;color:#2a2a2a;transform:scaleX(0.9249);left:417.25px;">Visit Type:</span>
<div class="fld" style="left:487px;top:542.0px;width:230px;height:23.500px"></div>
<span class="t" style="top:574.95px;font-size:15px;color:#2a2a2a;transform:scaleX(0.9515);left:380.25px;">Coverage Type:</span>
<div class="fld" style="left:487px;top:570.5px;width:230px;height:23.500px"></div>
<span class="t" style="top:573.75px;font-size:15px;color:#2a2a2a;transform:scaleX(0.8803);left:489.5px;">Medical</span>
<span class="t" style="top:604.2px;font-size:15px;color:#2a2a2a;transform:scaleX(0.9135);left:431.25px;">Ailment:</span>
<div class="fld" style="left:487px;top:599.75px;width:230px;height:23.500px"></div>
<span class="t" style="top:634.95px;font-size:15px;color:#2a2a2a;transform:scaleX(0.9341);left:399.75px;">Sched. Dept:</span>
<div class="fld" style="left:487px;top:630.5px;width:230px;height:23.500px"></div>
<span class="t" style="top:633.75px;font-size:15px;color:#2a2a2a;transform:scaleX(0.9200);left:489.5px;">Medical Department</span>
<span class="t" style="top:663.7px;font-size:15px;color:#2a2a2a;transform:scaleX(0.9217);left:377.75px;">Sched. Location:</span>
<div class="fld" style="left:487px;top:659.25px;width:230px;height:23.500px"></div>
<span class="t" style="top:662.5px;font-size:15px;color:#2a2a2a;transform:scaleX(0.9012);left:489.5px;">Allscripts Specialty Clinic</span>
<span class="t" style="top:692.7px;font-size:15px;color:#2a2a2a;transform:scaleX(0.9214);left:393px;">Resource:</span>
<div class="fld" style="left:487px;top:688.25px;width:230px;height:23.500px"></div>
<span class="t" style="top:691.5px;font-size:15px;color:#2a2a2a;transform:scaleX(0.8915);left:489.5px;">Plummer MD, David H</span>
<span class="t" style="top:721.45px;font-size:15px;color:#2a2a2a;transform:scaleX(0.9587);left:412.25px;">Appt Type:</span>
<div class="fld" style="left:487px;top:717.0px;width:230px;height:23.500px"></div>
<span class="t" style="top:750.2px;font-size:15px;color:#2a2a2a;transform:scaleX(0.9446);left:423.25px;">Duration:</span>
<div class="fld" style="left:487px;top:745.75px;width:60.5px;height:23.500px"></div>
<span class="t" style="top:778.95px;font-size:15px;color:#2a2a2a;transform:scaleX(0.9779);left:390.25px;">Refer. Doctor:</span>
<div class="fld" style="left:487px;top:774.5px;width:230px;height:23.500px"></div>
<span class="t" style="top:777.75px;font-size:15px;color:#2a2a2a;transform:scaleX(0.9049);left:489.5px;">Leonard MD, Dennis</span>
<span class="t" style="top:802.75px;font-size:15px;color:#2a2a2a;transform:scaleX(0.9063);left:411.25px;">Comments:</span>
<div class="fld" style="left:487px;top:803px;width:230px;height:39.500px"></div>
<span class="t" style="top:806.5px;font-size:15px;color:#2a2a2a;transform:scaleX(0.8967);left:489.5px;">Elevated PSA</span>
<div class="btn" style="left:460px;top:684px;width:22px;height:15.5px;border-right-width:1.500px;border-bottom-width:1.500px"></div>
<svg style="left:0;top:0" width="1" height="1"><path d="M467.0 693.05 L470.5 689.25 L474.0 693.05Z" fill="#1a1a1a"/></svg>
<div class="btn" style="left:460px;top:701px;width:22px;height:16px;border-right-width:1.500px;border-bottom-width:1.500px"></div>
<svg style="left:0;top:0" width="1" height="1"><path d="M467.0 706.7 L470.5 710.5 L474.0 706.7Z" fill="#1a1a1a"/></svg>
<div style="left:547px;top:746px;width:16.5px;height:23px;background:#fff;border:1.300px solid #6a6a6a"></div>
<div class="btn" style="left:549px;top:748px;width:12.5px;height:9px;border-right-width:1.500px;border-bottom-width:1.500px"></div>
<svg style="left:0;top:0" width="1" height="1"><path d="M551.25 753.8 L554.75 750.0 L558.25 753.8Z" fill="#1a1a1a"/></svg>
<div class="btn" style="left:549px;top:758px;width:12.5px;height:9px;border-right-width:1.500px;border-bottom-width:1.500px"></div>
<svg style="left:0;top:0" width="1" height="1"><path d="M551.25 760.2 L554.75 764.0 L558.25 760.2Z" fill="#1a1a1a"/></svg>
<div style="left:680px;top:264px;width:1016px;height:688.5px;background:#aaaaaa;border:1.300px solid #5e5e5e"></div>
<div style="left:689.5px;top:303.5px;width:997px;height:638px;background:#fff"></div>
<span class="t" style="top:277.5px;font-size:16px;color:#2c2c2c;transform:scaleX(0.9607);left:700.5px;">Incoming Referrals</span>
<div style="left:1643px;top:265.3px;width:43.5px;height:38px;background:#e07860;border-left:1px solid #b85a48;border-bottom:1px solid #b85a48"></div>
<svg style="left:1658.500px;top:277px" width="13" height="13" viewBox="0 0 13 13"><path d="M2 2 L11 11 M11 2 L2 11" stroke="#111" stroke-width="2.600"/></svg>
<span class="t" style="top:318.5px;font-size:15px;color:#2a2a2a;transform:scaleX(0.9298);left:696px;">Incoming Referrals for:  Derrick Davies</span>
<div style="left:700px;top:351.5px;width:30.3px;height:56.4px;background:#f4f4f4"></div>
<svg style="left:704px;top:356px" width="22" height="20" viewBox="0 0 22 20"><path d="M9 3 L19.500 14.500" stroke="#111" stroke-width="2.200"/><circle cx="5.500" cy="6" r="1" fill="#333"/><circle cx="2.500" cy="10.500" r="1" fill="#333"/><circle cx="6.500" cy="11.500" r="1" fill="#333"/><circle cx="8" cy="7.500" r=".8" fill="#555"/></svg>
<svg style="left:705px;top:385px" width="19" height="19" viewBox="0 0 19 19"><path d="M2.500 2.500 L15.500 16 M15.500 2 L2 16.500" stroke="#b01414" stroke-width="2.100" stroke-linecap="round"/></svg>
<div class="fld" style="left:733.500px;top:353.500px;width:938.500px;height:134.500px;border-top-color:#8c8c8c;border-left-color:#8c8c8c"></div>
<div style="left:736px;top:355.5px;width:88px;height:21px;background:#f3f3f3;border-right:1.500px solid #9a9a9a;border-bottom:1.500px solid #9a9a9a;border-top:1px solid #fff;border-left:1px solid #fff"></div>
<span class="t" style="top:358.5px;font-size:15px;color:#2a2a2a;transform:scaleX(0.9687);left:742.5px;">Refer. Date</span>
<div style="left:825.5px;top:355.5px;width:447.5px;height:21px;background:#f3f3f3;border-right:1.500px solid #9a9a9a;border-bottom:1.500px solid #9a9a9a;border-top:1px solid #fff;border-left:1px solid #fff"></div>
<span class="t" style="top:358.5px;font-size:15px;color:#2a2a2a;transform:scaleX(0.9177);left:833px;">Insurance Policy</span>
<div style="left:1274.5px;top:355.5px;width:169.0px;height:21px;background:#f3f3f3;border-right:1.500px solid #9a9a9a;border-bottom:1.500px solid #9a9a9a;border-top:1px solid #fff;border-left:1px solid #fff"></div>
<span class="t" style="top:358.5px;font-size:15px;color:#2a2a2a;transform:scaleX(0.9350);left:1281px;">Referral From</span>
<div style="left:1445px;top:355.5px;width:76.5px;height:21px;background:#f3f3f3;border-right:1.500px solid #9a9a9a;border-bottom:1.500px solid #9a9a9a;border-top:1px solid #fff;border-left:1px solid #fff"></div>
<span class="t" style="top:358.5px;font-size:15px;color:#2a2a2a;transform:scaleX(0.9659);left:1451px;">Refer To</span>
<div style="left:1523px;top:355.5px;width:72.5px;height:21px;background:#f3f3f3;border-right:1.500px solid #9a9a9a;border-bottom:1.500px solid #9a9a9a;border-top:1px solid #fff;border-left:1px solid #fff"></div>
<span class="t" style="top:358.5px;font-size:15px;color:#2a2a2a;transform:scaleX(0.8880);left:1529.5px;">Diagnosis</span>
<div style="left:1597px;top:355.5px;width:73.5px;height:21px;background:#f3f3f3;border-right:1.500px solid #9a9a9a;border-bottom:1.500px solid #9a9a9a;border-top:1px solid #fff;border-left:1px solid #fff"></div>
<span class="t" style="top:358.5px;font-size:15px;color:#2a2a2a;transform:scaleX(0.9287);left:1604.5px;">Status</span>
<div style="left:736px;top:375.3px;width:934.5px;height:2px;background:#7e7e7e"></div>
<div style="left:737.5px;top:377.5px;width:933px;height:18px;background:#0078d7"></div>
<span class="t" style="top:379.5px;font-size:15px;color:#fff;transform:scaleX(0.9590);left:742px;">10/03/2022</span>
<span class="t" style="top:379.5px;font-size:15px;color:#fff;transform:scaleX(0.9188);left:832.5px;">Blue Choice  (10)</span>
<span class="t" style="top:379.5px;font-size:15px;color:#fff;transform:scaleX(0.9357);left:1281px;">Leonard, Dennis</span>
<span class="t" style="top:379.5px;font-size:15px;color:#fff;transform:scaleX(0.8581);left:1451px;">Plummer</span>
<span class="t" style="top:379.5px;font-size:15px;color:#fff;transform:scaleX(0.9423);left:1604.5px;">Active</span>
<span class="t" style="top:504.0px;font-size:15px;color:#2a2a2a;transform:scaleX(0.9052);left:775px;">Policy:</span>
<span class="t" style="top:535.25px;font-size:15px;color:#2a2a2a;transform:scaleX(0.9360);left:724.5px;">Referral From:</span>
<span class="t" style="top:566.5px;font-size:15px;color:#2a2a2a;transform:scaleX(0.9655);left:720px;">Date Referred:</span>
<span class="t" style="top:597.75px;font-size:15px;color:#2a2a2a;transform:scaleX(0.9725);left:735px;">Referred To:</span>
<span class="t" style="top:629.0px;font-size:15px;color:#2a2a2a;transform:scaleX(0.9792);left:717px;">Authorization#:</span>
<span class="t" style="top:660.25px;font-size:15px;color:#2a2a2a;transform:scaleX(0.9705);left:698.5px;">Pre-Certification#:</span>
<span class="t" style="top:691.5px;font-size:15px;color:#2a2a2a;transform:scaleX(0.9194);left:746px;">Diagnoses:</span>
<span class="t" style="top:722.75px;font-size:15px;color:#2a2a2a;transform:scaleX(0.9274);left:740px;">Procedures:</span>
<span class="t" style="top:754.0px;font-size:15px;color:#2a2a2a;transform:scaleX(0.9510);left:713.5px;">Expiration Date:</span>
<span class="t" style="top:785.25px;font-size:15px;color:#2a2a2a;transform:scaleX(0.9254);left:708px;">Authorized Visits:</span>
<div class="fld" style="left:821px;top:498.75px;width:502.5px;height:23.5px"></div>
<div class="btn" style="left:1301px;top:500.5px;width:21.5px;height:21px;border-right-color:#6e6e6e;border-bottom-color:#6e6e6e"></div>
<svg style="left:0;top:0" width="1" height="1"><path d="M1307.05 508.25 H1315.45 L1311.25 513.75Z" fill="#111"/></svg>
<span class="t" style="top:502.0px;font-size:15px;color:#2a2a2a;transform:scaleX(0.9059);left:823.75px;">Blue Choice  (10)</span>
<div class="fld" style="left:821px;top:530.0px;width:471.5px;height:23.5px"></div>
<div style="left:1295px;top:529px;width:30px;height:27.5px;background:#f3f3f3"></div>
<svg style="left:1301.5px;top:535.5px" width="17" height="15" viewBox="0 0 17 15"><path d="M4 1.500h3v3h3v-3h3l3.200 9.500a3 3 0 0 1 -6 1.500V8.500h-3.400v3.500a3 3 0 0 1 -6 -1.500z" fill="#111"/><circle cx="3.800" cy="11" r="1.300" fill="#9a9a9a"/><circle cx="13.200" cy="11" r="1.300" fill="#9a9a9a"/></svg>
<span class="t" style="top:533.25px;font-size:15px;color:#2a2a2a;transform:scaleX(0.9267);left:825px;">Leonard MD, Dennis</span>
<div class="fld" style="left:821px;top:561.25px;width:120.5px;height:23.5px"></div>
<div class="btn" style="left:919px;top:562.5px;width:21.5px;height:21.5px;border-right-color:#6e6e6e;border-bottom-color:#6e6e6e"></div>
<svg style="left:0;top:0" width="1" height="1"><path d="M925.65 570.5 H932.85 L929.25 576.0Z" fill="#111"/></svg>
<span class="t" style="top:567.3px;font-size:15px;color:#2a2a2a;transform:scaleX(0.9590);left:828px;">10/03/2022</span>
<div class="fld" style="left:821px;top:592.5px;width:502.5px;height:23.5px"></div>
<div class="btn" style="left:1301px;top:594.25px;width:21.5px;height:21px;border-right-color:#6e6e6e;border-bottom-color:#6e6e6e"></div>
<svg style="left:0;top:0" width="1" height="1"><path d="M1307.05 602.0 H1315.45 L1311.25 607.5Z" fill="#111"/></svg>
<span class="t" style="top:595.75px;font-size:15px;color:#2a2a2a;transform:scaleX(0.8948);left:823.75px;">Plummer MD, David H</span>
<svg style="left:870px;top:584px" width="10" height="22" viewBox="0 0 10 22"><path d="M5 1.500v18M2 1.500h6M2 19.500h6" stroke="#555" stroke-width="1.100" fill="none"/></svg>
<div class="fld" style="left:821px;top:623.75px;width:502.5px;height:23.5px"></div>
<span class="t" style="top:627.0px;font-size:15px;color:#2a2a2a;transform:scaleX(0.9228);left:825px;">7398579843</span>
<div class="fld" style="left:821px;top:655.0px;width:502.5px;height:23.5px"></div>
<div style="left:1234px;top:685.5px;width:91px;height:27.5px;background:#f3f3f3"></div>
<div style="left:1234px;top:716.3px;width:91px;height:29px;background:#f3f3f3"></div>
<div class="fld" style="left:821px;top:686.25px;width:411.5px;height:23.5px"></div>
<svg style="left:1239.5px;top:693.5px" width="21" height="11" viewBox="0 0 21 11"><path d="M2.6 1.4h2.8l1.6 2.9 -1.6 2.900h-2.8l-1.600 -2.900z" fill="none" stroke="#a6a6a6" stroke-width="1.900" stroke-linejoin="round"/><path d="M7 4.200h13.500 M14 4.200v4.800 M18 4.200v4.800" stroke="#a6a6a6" stroke-width="1.900" fill="none"/></svg>
<svg style="left:1271.0px;top:692.0px" width="17" height="15" viewBox="0 0 17 15"><path d="M4 1.500h3v3h3v-3h3l3.200 9.500a3 3 0 0 1 -6 1.500V8.500h-3.400v3.500a3 3 0 0 1 -6 -1.500z" fill="#111"/><circle cx="3.800" cy="11" r="1.300" fill="#9a9a9a"/><circle cx="13.200" cy="11" r="1.300" fill="#9a9a9a"/></svg>
<svg style="left:1301px;top:690.5px" width="18" height="18" viewBox="0 0 18 18"><path d="M1 1h14.500l1.500 1.500V17H1z" fill="#efeff2" stroke="#26263a" stroke-width="1.700" stroke-linejoin="miter"/><rect x="2" y="2" width="14" height="4.500" fill="#dcdcfa"/><path d="M2.500 9h13M2.500 12.500h13" stroke="#c2c2cc" stroke-width="1"/></svg>
<div class="fld" style="left:821px;top:717.5px;width:411.5px;height:23.5px"></div>
<svg style="left:1239.5px;top:724.75px" width="21" height="11" viewBox="0 0 21 11"><path d="M2.6 1.4h2.8l1.6 2.9 -1.6 2.900h-2.8l-1.600 -2.900z" fill="none" stroke="#a6a6a6" stroke-width="1.900" stroke-linejoin="round"/><path d="M7 4.200h13.500 M14 4.200v4.800 M18 4.200v4.800" stroke="#a6a6a6" stroke-width="1.900" fill="none"/></svg>
<svg style="left:1271.0px;top:723.25px" width="17" height="15" viewBox="0 0 17 15"><path d="M4 1.500h3v3h3v-3h3l3.200 9.500a3 3 0 0 1 -6 1.500V8.500h-3.400v3.500a3 3 0 0 1 -6 -1.500z" fill="#111"/><circle cx="3.800" cy="11" r="1.300" fill="#9a9a9a"/><circle cx="13.200" cy="11" r="1.300" fill="#9a9a9a"/></svg>
<svg style="left:1301px;top:721.75px" width="18" height="18" viewBox="0 0 18 18"><path d="M1 1h14.500l1.500 1.500V17H1z" fill="#efeff2" stroke="#26263a" stroke-width="1.700" stroke-linejoin="miter"/><rect x="2" y="2" width="14" height="4.500" fill="#dcdcfa"/><path d="M2.500 9h13M2.500 12.500h13" stroke="#c2c2cc" stroke-width="1"/></svg>
<div class="fld" style="left:821px;top:748.75px;width:120.5px;height:23.5px"></div>
<div class="btn" style="left:919px;top:750.0px;width:21.5px;height:21.5px;border-right-color:#6e6e6e;border-bottom-color:#6e6e6e"></div>
<svg style="left:0;top:0" width="1" height="1"><path d="M925.65 758.0 H932.85 L929.25 763.5Z" fill="#111"/></svg>
<span class="t" style="top:754.8px;font-size:15px;color:#2a2a2a;transform:scaleX(0.9590);left:828px;">10/31/2022</span>
<div class="fld" style="left:821px;top:780.0px;width:104px;height:23.5px"></div>
<span class="t" style="top:786.05px;font-size:15px;color:#2a2a2a;left:828px;">1</span>
<div style="left:925px;top:780.25px;width:16px;height:24px;background:#fff;border:1.200px solid #7a7a7a"></div>
<div class="btn" style="left:927px;top:782.25px;width:12px;height:9.5px;border-right-width:1.500px;border-bottom-width:1.500px"></div>
<svg style="left:0;top:0" width="1" height="1"><path d="M929.0 788.3 L932.5 784.5 L936.0 788.3Z" fill="#1a1a1a"/></svg>
<div class="btn" style="left:927px;top:792.75px;width:12px;height:9.5px;border-right-width:1.500px;border-bottom-width:1.500px"></div>
<svg style="left:0;top:0" width="1" height="1"><path d="M929.0 795.2 L932.5 799.0 L936.0 795.2Z" fill="#1a1a1a"/></svg>
<div class="fld" style="left:977.5px;top:789px;width:14.500px;height:14.500px;border-width:2px 1px 1px 2px;border-top-color:#6e6e6e;border-left-color:#6e6e6e"></div>
<span class="t" style="top:788.0px;font-size:15px;color:#2a2a2a;transform:scaleX(0.9082);left:1000px;">Docum. Required</span>
<div style="left:1408px;top:513.3px;width:267px;height:1.2px;background:#c4c4c4"></div>
<div style="left:1466.5px;top:503px;width:118px;height:19.5px;background:#fff;border-right:1.200px solid #c8c8c8;border-bottom:1.200px solid #c8c8c8"></div>
<span class="t" style="top:506.0px;font-size:15px;color:#2a2a2a;transform:scaleX(0.9060);left:1472.5px;">Referral Statistics</span>
<span class="t" style="top:535.0px;font-size:15px;color:#2a2a2a;transform:scaleX(0.9297);left:1412.5px;">Authorized Visits:</span>
<span class="t" style="top:535.0px;font-size:15px;color:#2a2a2a;left:1567.83px;">1</span>
<span class="t" style="top:556.0px;font-size:15px;color:#2a2a2a;transform:scaleX(0.9167);left:1427px;">Charged Visits:</span>
<span class="t" style="top:556.0px;font-size:15px;color:#2a2a2a;left:1567.83px;">0</span>
<span class="t" style="top:577.0px;font-size:15px;color:#2a2a2a;transform:scaleX(0.9207);left:1412px;">Uncharged Visits:</span>
<span class="t" style="top:577.0px;font-size:15px;color:#2a2a2a;left:1567.83px;">1</span>
<span class="t" style="top:598.0px;font-size:15px;color:#2a2a2a;transform:scaleX(0.9397);left:1438px;">Future Visits:</span>
<span class="t" style="top:598.0px;font-size:15px;color:#2a2a2a;left:1567.83px;">0</span>
<span class="t" style="top:619.0px;font-size:15px;color:#2a2a2a;transform:scaleX(0.8909);left:1417px;">Visits Remaining:</span>
<span class="t" style="top:619.0px;font-size:15px;color:#2a2a2a;left:1567.83px;">0</span>
<div style="left:1526.5px;top:535px;width:1.2px;height:105px;background:#bcbcbc"></div>
<div style="left:1526.5px;top:650px;width:1.2px;height:42.5px;background:#bcbcbc"></div>
<span class="t" style="top:650.0px;font-size:15px;color:#2a2a2a;transform:scaleX(0.9554);left:1404.5px;">First Appointment:</span>
<span class="t" style="top:671.0px;font-size:15px;color:#2a2a2a;transform:scaleX(0.9366);left:1400.5px;">Date Last Voucher:</span>
<span class="t" style="top:650.0px;font-size:15px;color:#2a2a2a;transform:scaleX(0.9457);left:1534.5px;">10/13/2022</span>
<div style="left:1373.7px;top:761.3px;width:303.5px;height:43.7px;border:1.500px solid #c6c6c6"></div>
<div style="left:1382px;top:755px;width:46px;height:14px;background:#fff"></div>
<span class="t" style="top:754.0px;font-size:15px;color:#2a2a2a;transform:scaleX(0.9522);left:1385px;">Status</span>
<svg style="left:1385px;top:776.5px" width="16" height="16" viewBox="0 0 16 16"><circle cx="8" cy="8" r="6" fill="#fff" stroke="#d8d8d8" stroke-width="1.200"/><path d="M3.600 12.200 A6 6 0 0 1 12.200 3.600" fill="none" stroke="#6a6a6a" stroke-width="1.500"/><circle cx="8" cy="8" r="2.300" fill="#111"/></svg>
<span class="t" style="top:776.5px;font-size:15px;color:#2a2a2a;transform:scaleX(0.9300);left:1408px;">Active</span>
<svg style="left:1479px;top:776.5px" width="16" height="16" viewBox="0 0 16 16"><circle cx="8" cy="8" r="6" fill="#fff" stroke="#d8d8d8" stroke-width="1.200"/><path d="M3.600 12.200 A6 6 0 0 1 12.200 3.600" fill="none" stroke="#6a6a6a" stroke-width="1.500"/></svg>
<span class="t" style="top:776.5px;font-size:15px;color:#2a2a2a;transform:scaleX(0.9190);left:1501px;">Complete</span>
<svg style="left:1583px;top:776.5px" width="16" height="16" viewBox="0 0 16 16"><circle cx="8" cy="8" r="6" fill="#fff" stroke="#d8d8d8" stroke-width="1.200"/><path d="M3.600 12.200 A6 6 0 0 1 12.200 3.600" fill="none" stroke="#6a6a6a" stroke-width="1.500"/></svg>
<span class="t" style="top:776.5px;font-size:15px;color:#2a2a2a;transform:scaleX(0.9035);left:1605.5px;">No Show</span>
<div style="left:706px;top:817.5px;width:969px;height:1.2px;background:#c8c8c8"></div>
<div style="left:706px;top:895px;width:969px;height:1.2px;background:#c8c8c8"></div>
<span class="t" style="top:832.5px;font-size:15px;color:#2a2a2a;transform:scaleX(0.9456);left:774px;">Notes:</span>
<div class="fld" style="left:821px;top:827px;width:853px;height:56px"></div>
<span class="t" style="top:831.5px;font-size:15px;color:#2a2a2a;transform:scaleX(0.9410);left:823px;">New Patient Consultation</span>
<div class="fld" style="left:821px;top:914px;width:14.500px;height:14.500px;border-width:2px 1px 1px 2px;border-top-color:#6e6e6e;border-left-color:#6e6e6e"></div>
<svg style="left:823.5px;top:916.5px" width="10" height="10" viewBox="0 0 10 10"><path d="M1.200 4.500 L3.800 7.500 L8.800 1.800" stroke="#111" stroke-width="2" fill="none"/></svg>
<span class="t" style="top:913.5px;font-size:15px;color:#2a2a2a;transform:scaleX(0.9640);left:843.75px;"><u>A</u>ttach to Appointment</span>
<div class="fld" style="left:998.75px;top:914px;width:14.500px;height:14.500px;border-width:2px 1px 1px 2px;border-top-color:#6e6e6e;border-left-color:#6e6e6e"></div>
<span class="t" style="top:913.5px;font-size:15px;color:#2a2a2a;transform:scaleX(0.9433);left:1020.5px;"><u>L</u>ink (do not count visit)</span>
<div class="btn" style="left:1430px;top:908px;width:72.5px;height:26px"></div>
<span class="t" style="top:911.5px;font-size:15px;color:#a4a4a4;transform:scaleX(0.9210);left:1448.5px;"><u>S</u>ave</span>
<div class="btn" style="left:1508px;top:908px;width:72.5px;height:26px"></div>
<span class="t" style="top:911.5px;font-size:15px;color:#a4a4a4;transform:scaleX(0.8993);left:1522px;"><u>C</u>ancel</span>
<div style="left:1597.5px;top:908px;width:73.5px;height:26.5px;background:#4a4a4a"></div>
<div class="btn" style="left:1598.5px;top:909px;width:71.5px;height:24.5px"></div>
<span class="t" style="top:911.5px;font-size:15px;color:#1a1a1a;transform:scaleX(0.8761);left:1623.5px;"><u>O</u>K</span>
</body></html>
